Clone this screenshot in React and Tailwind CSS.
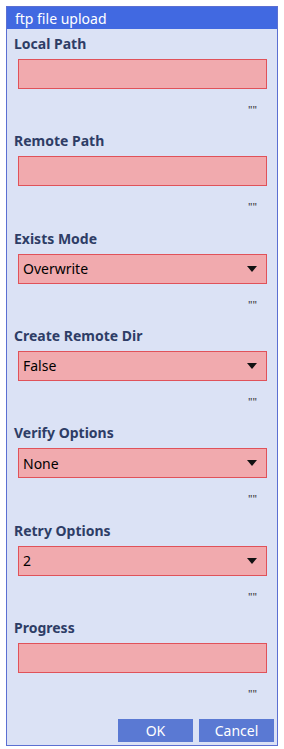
import React from 'react';

const fields = [
  { label: 'Local Path', type: 'text' },
  { label: 'Remote Path', type: 'text' },
  { label: 'Exists Mode', type: 'select', value: 'Overwrite' },
  { label: 'Create Remote Dir', type: 'select', value: 'False' },
  { label: 'Verify Options', type: 'select', value: 'None' },
  { label: 'Retry Options', type: 'select', value: '2' },
  { label: 'Progress', type: 'text' },
];

function Field({ field }) {
  return (
    <div className="flex h-[97.33px] flex-col">
      <div className="h-[20px] pl-[7px] text-[14px] font-bold leading-[20px] text-[#2e3d66]">{field.label}</div>
      <div className="mt-[5px] flex h-[30px] items-center border border-[#e0525a] bg-[#f1aaae] px-[4px] ml-[11px] mr-[10px]">
        {field.type === 'select' && (
          <>
            <span className="flex-1 text-[14px] text-black">{field.value}</span>
            <svg width="10" height="6" viewBox="0 0 10 6" className="mr-[5px]">
              <path d="M0 0 L10 0 L5 6 Z" fill="#111" />
            </svg>
          </>
        )}
      </div>
      <div className="mt-[14px] flex justify-end pr-[20px] text-[11px] leading-[14px] text-[#333]">""</div>
    </div>
  );
}

export default function App() {
  return (
    <div className="min-h-[749px] bg-white pt-[6px] pl-[6px]" style={{ fontFamily: '"Noto Sans", "Open Sans", sans-serif' }}>
      <div className="flex h-[740px] w-[272px] flex-col border border-[#5b6fd2] bg-[#dbe2f5]">
        <div className="flex h-[22px] items-center bg-[#4169e1] pl-[8px] text-[14px] text-white">ftp file upload</div>
        <div className="pt-[5px]">
          {fields.map((f) => (
            <Field key={f.label} field={f} />
          ))}
        </div>
        <div className="mt-auto mb-[3px] flex justify-end gap-[6px] pr-[3px]">
          <button className="h-[23px] w-[75px] bg-[#5a79d3] text-[14px] text-white">OK</button>
          <button className="h-[23px] w-[75px] bg-[#5a79d3] text-[14px] text-white">Cancel</button>
        </div>
      </div>
    </div>
  );
}
